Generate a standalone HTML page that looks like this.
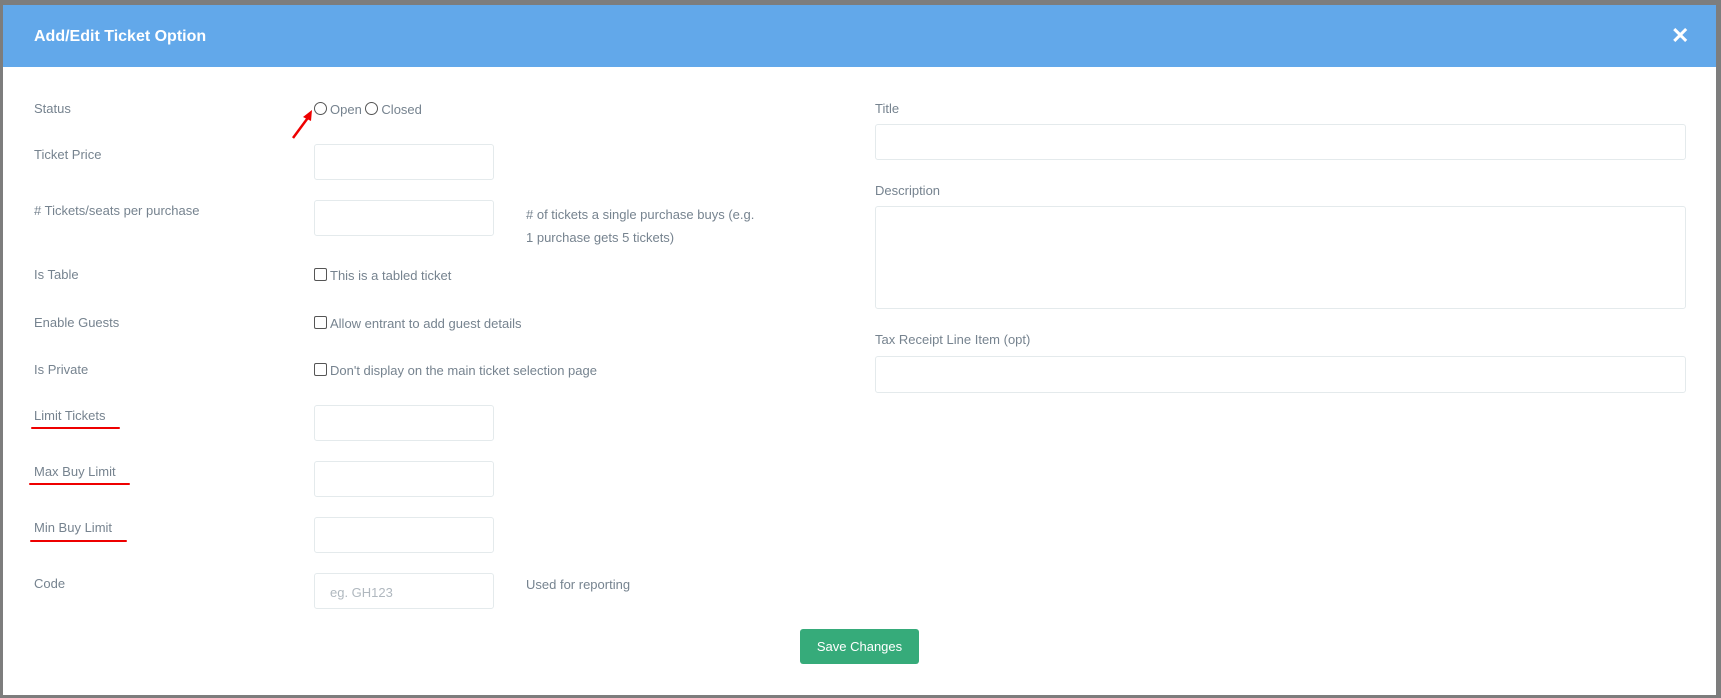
<!DOCTYPE html>
<html><head><style>
body{margin:0;width:1721px;height:698px;background:#7d7d7d;position:relative;overflow:hidden;font-family:"Liberation Sans",sans-serif;}
.modal{position:absolute;left:3px;top:5px;width:1713px;height:690px;background:#fff;}
.hdr{position:absolute;left:0;top:0;width:100%;height:62px;background:#62a8ea;}
.hdr h4{position:absolute;left:31px;top:23px;margin:0;color:#fff;font-size:16px;font-weight:bold;}
.x{position:absolute;left:1668px;top:18px;color:#fff;font-size:22px;font-weight:bold;}
.l{position:absolute;color:#76838f;font-size:13px;}
.in{position:absolute;border:1px solid #e4eaec;border-radius:3px;box-sizing:border-box;background:#fff;}
.u{position:absolute;height:2px;background:#e00;border-radius:1px;}
.cb{display:inline-block;width:11px;height:11px;border:1px solid #555;border-radius:2px;vertical-align:-1px;margin-right:3px;}
.rb{display:inline-block;width:11px;height:11px;border:1px solid #555;border-radius:50%;vertical-align:-1px;margin-right:3px;}
.btn{position:absolute;left:797px;top:624px;width:119px;height:35px;background:#36ab7a;border-radius:3px;color:#fff;font-size:13px;text-align:center;line-height:35px;}
</style></head><body>
<div class="modal">
<div class="hdr"><h4>Add/Edit Ticket Option</h4><div class="x">✕</div></div>
<div class="l" style="left:31px;top:96px">Status</div>
<div class="l" style="left:311px;top:97px"><span class="rb"></span>Open <span class="rb"></span>Closed</div>
<div class="l" style="left:31px;top:142px">Ticket Price</div>
<div class="in" style="left:311px;top:139px;width:180px;height:36px"></div>
<div class="l" style="left:31px;top:198px"># Tickets/seats per purchase</div>
<div class="in" style="left:311px;top:195px;width:180px;height:36px"></div>
<div class="l" style="left:523px;top:198px;line-height:23px"># of tickets a single purchase buys (e.g.<br>1 purchase gets 5 tickets)</div>
<div class="l" style="left:31px;top:262px">Is Table</div>
<div class="l" style="left:311px;top:263px"><span class="cb"></span>This is a tabled ticket</div>
<div class="l" style="left:31px;top:310px">Enable Guests</div>
<div class="l" style="left:311px;top:311px"><span class="cb"></span>Allow entrant to add guest details</div>
<div class="l" style="left:31px;top:357px">Is Private</div>
<div class="l" style="left:311px;top:358px"><span class="cb"></span>Don't display on the main ticket selection page</div>
<div class="l" style="left:31px;top:403px">Limit Tickets</div>
<div class="u" style="left:28px;top:422px;width:89px"></div>
<div class="in" style="left:311px;top:400px;width:180px;height:36px"></div>
<div class="l" style="left:31px;top:459px">Max Buy Limit</div>
<div class="u" style="left:26px;top:478px;width:101px"></div>
<div class="in" style="left:311px;top:456px;width:180px;height:36px"></div>
<div class="l" style="left:31px;top:515px">Min Buy Limit</div>
<div class="u" style="left:27px;top:535px;width:97px"></div>
<div class="in" style="left:311px;top:512px;width:180px;height:36px"></div>
<div class="l" style="left:31px;top:571px">Code</div>
<div class="in" style="left:311px;top:568px;width:180px;height:36px"></div>
<div class="l" style="left:327px;top:580px;color:#b0b8bf">eg. GH123</div>
<div class="l" style="left:523px;top:572px">Used for reporting</div>
<div class="l" style="left:872px;top:96px">Title</div>
<div class="in" style="left:872px;top:119px;width:811px;height:36px"></div>
<div class="l" style="left:872px;top:178px">Description</div>
<div class="in" style="left:872px;top:201px;width:811px;height:103px"></div>
<div class="l" style="left:872px;top:327px">Tax Receipt Line Item (opt)</div>
<div class="in" style="left:872px;top:351px;width:811px;height:37px"></div>
<div class="btn">Save Changes</div>
</div>
<svg style="position:absolute;left:290px;top:104px" width="30" height="40"><path d="M3 34 L20 11" stroke="#e00" stroke-width="2.5"/><path d="M22 6 L13 13 L21 17 Z" fill="#e00"/></svg>
</body></html>
